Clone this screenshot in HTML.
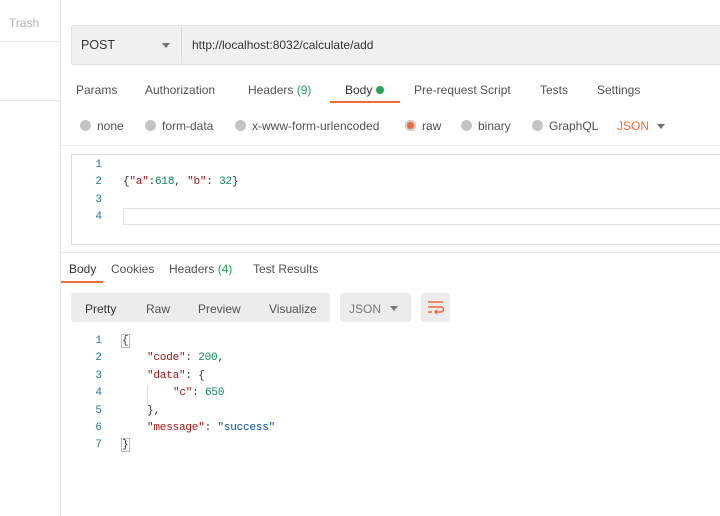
<!DOCTYPE html><html><head><style>
body{margin:0;width:720px;height:516px;background:#fff;font-family:"Liberation Sans",sans-serif;font-size:12px;color:#505050;position:relative;overflow:hidden}
.a{position:absolute;white-space:nowrap}
.m{font-family:"Liberation Mono",monospace;font-size:11px}
.ln{color:#237893;width:20px;text-align:right}
.dot{display:inline-block;width:11px;height:11px;border-radius:50%;background:#c4c4c4;vertical-align:-1px;margin-right:6px}
.k{color:#a31515}.n{color:#098658}.s{color:#0451a5}.p{color:#333}
</style></head><body>
<div class="a" style="left:60px;top:0;width:1px;height:516px;background:#e6e6e6"></div>
<div class="a" style="left:9px;top:16px;color:#b5b5b5;font-size:12px">Trash</div>
<div class="a" style="left:0;top:41px;width:60px;height:1px;background:#e6e6e6"></div>
<div class="a" style="left:0;top:100px;width:60px;height:1px;background:#e6e6e6"></div>
<div class="a" style="left:71px;top:25px;width:660px;height:38px;background:#f0f0f0;border:1px solid #e0e0e0;border-radius:3px"></div>
<div class="a" style="left:181px;top:26px;width:1px;height:37px;background:#dcdcdc"></div>
<div class="a" style="left:81px;top:38px;color:#333;font-size:12.5px">POST</div>
<div class="a" style="left:162px;top:43px;border-left:4px solid transparent;border-right:4px solid transparent;border-top:5px solid #707070"></div>
<div class="a" style="left:192px;top:38px;color:#333">http://localhost:8032/calculate/add</div>
<div class="a" style="left:76px;top:83px">Params</div>
<div class="a" style="left:145px;top:83px">Authorization</div>
<div class="a" style="left:248px;top:83px">Headers <span style="color:#26a65b">(9)</span></div>
<div class="a" style="left:345px;top:83px;color:#333">Body <span style="display:inline-block;width:8px;height:8px;border-radius:50%;background:#26a65b;vertical-align:0"></span></div>
<div class="a" style="left:330px;top:101px;width:70px;height:2px;background:#f26b3a"></div>
<div class="a" style="left:414px;top:83px">Pre-request Script</div>
<div class="a" style="left:540px;top:83px">Tests</div>
<div class="a" style="left:597px;top:83px">Settings</div>
<div class="a" style="left:80px;top:119px"><span class="dot"></span>none</div>
<div class="a" style="left:145px;top:119px"><span class="dot"></span>form-data</div>
<div class="a" style="left:235px;top:119px"><span class="dot"></span>x-www-form-urlencoded</div>
<div class="a" style="left:405px;top:119px"><span class="dot" style="background:#f26b3a;box-shadow:0 0 0 2px #d0d0d0 inset;border:0"></span>raw</div>
<div class="a" style="left:461px;top:119px"><span class="dot"></span>binary</div>
<div class="a" style="left:532px;top:119px"><span class="dot"></span>GraphQL</div>
<div class="a" style="left:617px;top:119px;color:#f26b3a">JSON</div>
<div class="a" style="left:657px;top:124px;border-left:4px solid transparent;border-right:4px solid transparent;border-top:5px solid #707070"></div>
<div class="a" style="left:61px;top:145px;width:660px;height:1px;background:#eee"></div>
<div class="a" style="left:71px;top:154px;width:660px;height:89px;border:1px solid #ddd"></div>
<div class="a m ln" style="left:82px;top:159px">1</div>
<div class="a m ln" style="left:82px;top:176px">2</div>
<div class="a m ln" style="left:82px;top:194px">3</div>
<div class="a m ln" style="left:82px;top:211px">4</div>
<div class="a m" style="left:123px;top:176px;letter-spacing:-0.2px"><span class="p">{</span><span class="k">"a"</span><span class="p">:</span><span class="n">618</span><span class="p">, </span><span class="k">"b"</span><span class="p">: </span><span class="n">32</span><span class="p">}</span></div>
<div class="a" style="left:123px;top:208px;width:600px;height:15px;border:1px solid #e4e4e4"></div>
<div class="a" style="left:61px;top:252px;width:660px;height:1px;background:#e6e6e6"></div>
<div class="a" style="left:69px;top:262px;color:#333">Body</div>
<div class="a" style="left:61px;top:281px;width:42px;height:2px;background:#f26b3a"></div>
<div class="a" style="left:111px;top:262px">Cookies</div>
<div class="a" style="left:169px;top:262px">Headers <span style="color:#26a65b">(4)</span></div>
<div class="a" style="left:253px;top:262px">Test Results</div>
<div class="a" style="left:71px;top:293px;width:259px;height:29px;background:#ececec;border-radius:3px"></div>
<div class="a" style="left:85px;top:302px;color:#333">Pretty</div>
<div class="a" style="left:146px;top:302px">Raw</div>
<div class="a" style="left:198px;top:302px">Preview</div>
<div class="a" style="left:269px;top:302px">Visualize</div>
<div class="a" style="left:340px;top:293px;width:71px;height:29px;background:#ececec;border-radius:3px"></div>
<div class="a" style="left:349px;top:302px;color:#777">JSON</div>
<div class="a" style="left:390px;top:306px;border-left:4px solid transparent;border-right:4px solid transparent;border-top:5px solid #777"></div>
<div class="a" style="left:421px;top:293px;width:29px;height:29px;background:#ececec;border-radius:3px"></div>
<svg class="a" style="left:427px;top:299px" width="17" height="17" viewBox="0 0 17 17" fill="none" stroke="#f26b3a" stroke-width="1.5"><path d="M1 3h15M1 8h13a2.5 2.5 0 0 1 0 5H8M10 11l-2 2 2 2M1 13h4"/></svg>
<div class="a m ln" style="left:82px;top:335px">1</div>
<div class="a m ln" style="left:82px;top:352px">2</div>
<div class="a m ln" style="left:82px;top:370px">3</div>
<div class="a m ln" style="left:82px;top:387px">4</div>
<div class="a m ln" style="left:82px;top:405px">5</div>
<div class="a m ln" style="left:82px;top:422px">6</div>
<div class="a m ln" style="left:82px;top:439px">7</div>
<div class="a" style="left:147px;top:386px;width:1px;height:17px;background:#ddd"></div>
<div class="a m p" style="left:122px;top:335px;outline:1px solid #bbb">{</div>
<div class="a m" style="left:147px;top:352px;letter-spacing:-0.2px"><span class="k">"code"</span><span class="p">: </span><span class="n">200</span><span class="p">,</span></div>
<div class="a m" style="left:147px;top:370px;letter-spacing:-0.2px"><span class="k">"data"</span><span class="p">: {</span></div>
<div class="a m" style="left:173px;top:387px;letter-spacing:-0.2px"><span class="k">"c"</span><span class="p">: </span><span class="n">650</span></div>
<div class="a m p" style="left:147px;top:405px">},</div>
<div class="a m" style="left:147px;top:422px;letter-spacing:-0.2px"><span class="k">"message"</span><span class="p">: </span><span class="s">"success"</span></div>
<div class="a m p" style="left:122px;top:439px;outline:1px solid #bbb">}</div>
</body></html>
